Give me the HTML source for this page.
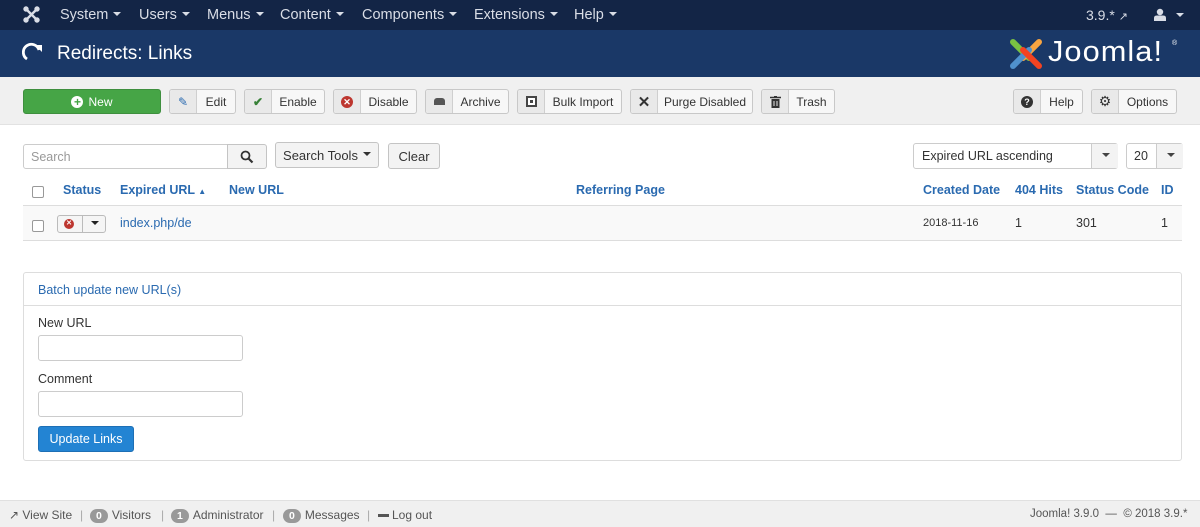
<!DOCTYPE html>
<html><head><meta charset="utf-8"><style>
*{box-sizing:border-box;margin:0;padding:0}
body{width:1200px;height:527px;overflow:hidden;background:#fff;font-family:"Liberation Sans",sans-serif;font-size:13px;color:#333;position:relative}
.a{position:absolute}
#nav{left:0;top:0;width:1200px;height:30px;background:#132546;color:#d9dde6;font-size:14.5px}
#nav .n{position:absolute;top:7px}
.car{display:inline-block;width:0;height:0;border-left:4px solid transparent;border-right:4px solid transparent;border-top:4px solid #d9dde6;vertical-align:middle;margin-left:5px;margin-top:-2px}
#hdr{left:0;top:30px;width:1200px;height:47px;background:#1a3867;color:#fff}
#tb{left:0;top:77px;width:1200px;height:48px;background:#f0f0f0;border-bottom:1px solid #e2e2e2}
.btn{position:absolute;top:12px;height:25px;border:1px solid #c8c8c8;border-radius:3px;background:#f7f7f7;display:flex;font-size:12px;color:#333;overflow:hidden}
.btn .i{width:27px;background:#e9e9e9;border-right:1px solid #cfcfcf;display:flex;align-items:center;justify-content:center}
.btn .t{flex:1;display:flex;align-items:center;justify-content:center}
.inp{position:absolute;border:1px solid #ccc;border-radius:3px;background:#fff}
.gb{position:absolute;border:1px solid #c4c4c4;border-radius:3px;background:#f3f3f3;font-size:13px;display:flex;align-items:center;justify-content:center}
.th{position:absolute;top:183px;color:#2a6ab0;font-weight:bold;font-size:12.5px}
.td{position:absolute;top:216px;font-size:12.5px}
.cb{position:absolute;width:12px;height:12px;border:1px solid #999;border-radius:2px;background:#fff}
#ft{left:0;top:500px;width:1200px;height:27px;background:#f0f0f0;border-top:1px solid #e0e0e0;color:#555;font-size:12px}
#ft .f{position:absolute;top:7px;white-space:nowrap}
.badge{display:inline-block;background:#999;color:#fff;border-radius:9px;padding:1px 6px;font-size:10.5px;font-weight:bold;margin-right:4px}
.sep{color:#aaa}
</style></head><body>
<div id="nav" class="a">
<svg class="a" style="left:23px;top:6px" width="17" height="17" viewBox="0 0 17 17"><g stroke="#d9dde6" stroke-width="2.4" fill="none" stroke-linecap="round"><path d="M3 3 L14 14 M14 3 L3 14"/><circle cx="3" cy="3" r="1.5"/><circle cx="14" cy="3" r="1.5"/><circle cx="3" cy="14" r="1.5"/><circle cx="14" cy="14" r="1.5"/></g></svg>
<span class="n" style="left:60px">System<i class="car"></i></span>
<span class="n" style="left:139px">Users<i class="car"></i></span>
<span class="n" style="left:207px">Menus<i class="car"></i></span>
<span class="n" style="left:280px">Content<i class="car"></i></span>
<span class="n" style="left:362px">Components<i class="car"></i></span>
<span class="n" style="left:474px">Extensions<i class="car"></i></span>
<span class="n" style="left:574px">Help<i class="car"></i></span>
<span class="n" style="left:1086px;font-size:14px">3.9.* <span style="font-size:11px">&#x2197;</span></span>
<svg class="a" style="left:1154px;top:8px" width="12" height="13" viewBox="0 0 12 13"><circle cx="6" cy="4" r="3.2" fill="#d9dde6"/><path d="M0 13 L0 10 Q0 7.5 3 7.5 L9 7.5 Q12 7.5 12 10 L12 13 Z" fill="#d9dde6"/></svg>
<i class="car a" style="left:1171px;top:15px"></i>
</div>
<div id="hdr" class="a">
<svg class="a" style="left:22px;top:12px" width="22" height="22" viewBox="0 0 22 22"><path d="M17 8 A8 8 0 1 0 5 17" stroke="#fff" stroke-width="2.8" fill="none"/><path d="M13 3 L20 3 L20 10 Z" fill="#fff"/></svg>
<div class="a" style="left:57px;top:13px;font-size:19px">Redirects: Links</div>
<svg class="a" style="left:1007px;top:6px" width="38" height="36" viewBox="0 0 38 36"><g stroke-width="6" fill="none" stroke-linecap="round"><path d="M6 6 L22 22" stroke="#7ac143"/><path d="M32 6 L16 22" stroke="#f9a541"/><path d="M6 30 L22 14" stroke="#5091cd"/><path d="M32 30 L16 14" stroke="#f44321"/></g></svg>
<div class="a" style="left:1048px;top:6px;font-size:29px;letter-spacing:1px;transform:scaleX(1.06);transform-origin:left">Joomla!</div>
<div class="a" style="left:1172px;top:10px;font-size:7px">®</div>
</div>
<div id="tb" class="a">
<div class="btn" style="left:23px;width:138px;background:#46a546;border-color:#3e8f3e;color:#fff;justify-content:center;align-items:center"><span style="display:inline-block;width:12px;height:12px;border-radius:50%;background:#fff;color:#46a546;font-size:12px;line-height:12px;text-align:center;font-weight:bold;margin-right:5px">+</span>New</div>
<div class="btn" style="left:169px;width:67px"><div class="i" style="color:#2a6ab0">&#x270E;</div><div class="t">Edit</div></div>
<div class="btn" style="left:244px;width:81px"><div class="i" style="color:#378137;font-weight:bold">&#x2714;</div><div class="t">Enable</div></div>
<div class="btn" style="left:333px;width:84px"><div class="i"><span style="display:inline-block;width:12px;height:12px;border-radius:50%;background:#bd362f;color:#fff;font-size:9px;line-height:12px;text-align:center;font-weight:bold">✕</span></div><div class="t">Disable</div></div>
<div class="btn" style="left:425px;width:84px"><div class="i"><span style="display:inline-block;width:11px;height:7px;background:#555;border-radius:3px 3px 0 0"></span></div><div class="t">Archive</div></div>
<div class="btn" style="left:517px;width:105px"><div class="i"><span style="display:inline-block;width:11px;height:11px;border:2px solid #444;box-shadow:inset 0 0 0 2px #fff;background:#444"></span></div><div class="t">Bulk Import</div></div>
<div class="btn" style="left:630px;width:123px"><div class="i" style="font-weight:bold;font-size:15px">✕</div><div class="t">Purge Disabled</div></div>
<div class="btn" style="left:761px;width:74px"><div class="i"><svg width="11" height="12" viewBox="0 0 11 12"><path d="M0 1.5 H11 M4 0 H7" stroke="#333" stroke-width="1.5"/><path d="M1.5 3 H9.5 V12 H1.5 Z" fill="#333"/><path d="M4 5 V10 M7 5 V10" stroke="#e9e9e9" stroke-width="1"/></svg></div><div class="t">Trash</div></div>
<div class="btn" style="left:1013px;width:70px"><div class="i"><span style="display:inline-block;width:12px;height:12px;border-radius:50%;background:#333;color:#fff;font-size:9px;line-height:12px;text-align:center;font-weight:bold">?</span></div><div class="t">Help</div></div>
<div class="btn" style="left:1091px;width:86px"><div class="i" style="font-size:14px">&#x2699;&#xFE0E;</div><div class="t">Options</div></div>
</div>
<div class="inp" style="left:23px;top:144px;width:205px;height:25px;border-radius:3px 0 0 3px"><span class="a" style="left:7px;top:5px;color:#999;font-size:12.5px">Search</span></div>
<div class="gb" style="left:227px;top:144px;width:40px;height:25px;border-radius:0 3px 3px 0"><svg width="14" height="14" viewBox="0 0 14 14"><circle cx="5.5" cy="5.5" r="4" stroke="#333" stroke-width="1.8" fill="none"/><path d="M8.5 8.5 L12.5 12.5" stroke="#333" stroke-width="2.2"/></svg></div>
<div class="gb" style="left:275px;top:142px;width:104px;height:26px">Search Tools<i class="car" style="border-top-color:#333"></i></div>
<div class="gb" style="left:388px;top:143px;width:52px;height:26px">Clear</div>
<div class="inp" style="left:913px;top:143px;width:205px;height:26px"><span class="a" style="left:8px;top:5px;font-size:12.5px">Expired URL ascending</span><div class="a" style="left:177px;top:0;width:27px;height:24px;border-left:1px solid #ccc;background:#f3f3f3"><i class="car" style="border-top-color:#444;position:absolute;left:5px;top:11px"></i></div></div>
<div class="inp" style="left:1126px;top:143px;width:57px;height:26px"><span class="a" style="left:7px;top:5px;font-size:12.5px">20</span><div class="a" style="left:29px;top:0;width:27px;height:24px;border-left:1px solid #ccc;background:#f3f3f3"><i class="car" style="border-top-color:#444;position:absolute;left:5px;top:11px"></i></div></div>
<div class="cb" style="left:32px;top:186px"></div>
<div class="th" style="left:63px">Status</div>
<div class="th" style="left:120px">Expired URL <span style="font-size:8px">&#x25B2;</span></div>
<div class="th" style="left:229px">New URL</div>
<div class="th" style="left:576px">Referring Page</div>
<div class="th" style="left:923px">Created Date</div>
<div class="th" style="left:1015px">404 Hits</div>
<div class="th" style="left:1076px">Status Code</div>
<div class="th" style="left:1161px">ID</div>
<div class="a" style="left:23px;top:205px;width:1159px;height:36px;background:#f9f9f9;border-top:1px solid #ddd;border-bottom:1px solid #ddd"></div>
<div class="cb" style="left:32px;top:220px"></div>
<div class="a" style="left:57px;top:215px;width:49px;height:18px;border:1px solid #bbb;border-radius:3px;background:#f5f5f5"><span class="a" style="left:6px;top:3px;width:10px;height:10px;border-radius:50%;background:#bd362f;color:#fff;font-size:7px;line-height:10px;text-align:center;font-weight:bold">✕</span><div class="a" style="left:24px;top:0;width:1px;height:16px;background:#bbb"></div><i class="car" style="border-top-color:#222;position:absolute;left:28px;top:7px"></i></div>
<div class="td" style="left:120px;color:#2a6ab0">index.php/de</div>
<div class="td" style="left:923px;font-size:11px;top:217px">2018-11-16</div>
<div class="td" style="left:1015px">1</div>
<div class="td" style="left:1076px">301</div>
<div class="td" style="left:1161px">1</div>
<div class="a" style="left:23px;top:272px;width:1159px;height:189px;border:1px solid #ddd;border-radius:3px"></div>
<div class="a" style="left:24px;top:305px;width:1157px;height:1px;background:#ddd"></div>
<div class="a" style="left:38px;top:283px;color:#2a6ab0;font-size:12.5px">Batch update new URL(s)</div>
<div class="a" style="left:38px;top:316px;font-size:12.5px">New URL</div>
<div class="inp" style="left:38px;top:335px;width:205px;height:26px"></div>
<div class="a" style="left:38px;top:372px;font-size:12.5px">Comment</div>
<div class="inp" style="left:38px;top:391px;width:205px;height:26px"></div>
<div class="a" style="left:38px;top:426px;width:96px;height:26px;background:#2384d3;border:1px solid #1d6fb5;border-radius:3px;color:#fff;font-size:12.5px;display:flex;align-items:center;justify-content:center">Update Links</div>
<div id="ft" class="a">
<span class="f" style="left:9px">&#x2197; View Site</span>
<span class="f sep" style="left:80px">|</span>
<span class="f" style="left:90px"><span class="badge">0</span>Visitors</span>
<span class="f sep" style="left:161px">|</span>
<span class="f" style="left:171px"><span class="badge">1</span>Administrator</span>
<span class="f sep" style="left:272px">|</span>
<span class="f" style="left:283px"><span class="badge">0</span>Messages</span>
<span class="f sep" style="left:367px">|</span>
<span class="f" style="left:378px"><b style="display:inline-block;width:11px;height:3px;background:#555;vertical-align:middle;margin-right:3px"></b>Log out</span>
<span class="f" style="left:1030px;font-size:11.5px">Joomla! 3.9.0 &nbsp;— &nbsp;© 2018 3.9.*</span>
</div>
</body></html>
